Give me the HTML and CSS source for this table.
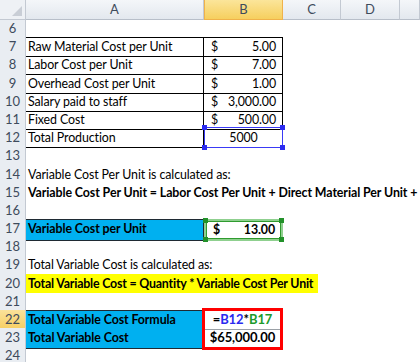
FILE: index.html
```html
<!DOCTYPE html>
<html>
<head>
<link rel="stylesheet" href="styles.css">
</head>
<body>
<div class="sheet">
  <div class="row head">
    <div class="corner"><span class="tri"></span></div>
    <div class="colh">A</div>
    <div class="colh sel">B</div>
    <div class="colh">C</div>
    <div class="colh">D</div>
    <div class="colh"></div>
  </div>

  <div class="row"><div class="rowh">6</div><div class="cell"></div><div class="cell"></div><div class="cell"></div><div class="cell"></div><div class="cell"></div></div>

  <div class="row"><div class="rowh">7</div><div class="cell box top">Raw Material Cost per Unit</div><div class="cell box top money"><span>$</span><span>5.00</span></div><div class="cell"></div><div class="cell"></div><div class="cell"></div></div>
  <div class="row"><div class="rowh">8</div><div class="cell box">Labor Cost per Unit</div><div class="cell box money"><span>$</span><span>7.00</span></div><div class="cell"></div><div class="cell"></div><div class="cell"></div></div>
  <div class="row"><div class="rowh">9</div><div class="cell box">Overhead Cost per Unit</div><div class="cell box money"><span>$</span><span>1.00</span></div><div class="cell"></div><div class="cell"></div><div class="cell"></div></div>
  <div class="row"><div class="rowh">10</div><div class="cell box">Salary paid to staff</div><div class="cell box money"><span>$</span><span>3,000.00</span></div><div class="cell"></div><div class="cell"></div><div class="cell"></div></div>
  <div class="row"><div class="rowh">11</div><div class="cell box">Fixed Cost</div><div class="cell box money"><span>$</span><span>500.00</span></div><div class="cell"></div><div class="cell"></div><div class="cell"></div></div>
  <div class="row"><div class="rowh">12</div><div class="cell box">Total Production</div>
    <div class="cell ref ref-blue center">5000<i class="h tl"></i><i class="h tr"></i><i class="h bl"></i><i class="h br"></i></div>
    <div class="cell"></div><div class="cell"></div><div class="cell"></div></div>

  <div class="row"><div class="rowh">13</div><div class="cell wide"></div></div>
  <div class="row"><div class="rowh">14</div><div class="cell wide">Variable Cost Per Unit is calculated as:</div></div>
  <div class="row"><div class="rowh">15</div><div class="cell wide bold">Variable Cost Per Unit = Labor Cost Per Unit + Direct Material Per Unit +</div></div>
  <div class="row"><div class="rowh">16</div><div class="cell wide"></div></div>

  <div class="row"><div class="rowh">17</div><div class="cell fill top-line bold">Variable Cost per Unit</div>
    <div class="cell ref ref-green money bold"><span>$</span><span>13.00</span><i class="h tl"></i><i class="h tr"></i><i class="h bl"></i><i class="h br"></i></div>
    <div class="cell"></div><div class="cell"></div><div class="cell"></div></div>

  <div class="row"><div class="rowh">18</div><div class="cell wide"></div></div>
  <div class="row"><div class="rowh">19</div><div class="cell wide">Total Variable Cost is calculated as:</div></div>
  <div class="row"><div class="rowh">20</div><div class="cell wide bold"><span class="mark">Total Variable Cost = Quantity * Variable Cost Per Unit</span></div></div>
  <div class="row"><div class="rowh">21</div><div class="cell wide"></div></div>

  <div class="row"><div class="rowh active">22</div><div class="cell fill top-line bold">Total Variable Cost Formula</div>
    <div class="cell result first center bold">=<span class="blue">B12</span>*<span class="green">B17</span></div>
    <div class="cell"></div><div class="cell"></div><div class="cell"></div></div>
  <div class="row"><div class="rowh">23</div><div class="cell fill bold">Total Variable Cost</div>
    <div class="cell result last center bold">$65,000.00</div>
    <div class="cell"></div><div class="cell"></div><div class="cell"></div></div>

  <div class="row"><div class="rowh">24</div><div class="cell wide"></div></div>
</div>
</body>
</html>
```

FILE: styles.css
```css
body {
  margin: 0;
  background: #fff;
  font-family: Lato, "Liberation Sans", sans-serif;
  font-size: 12.4px;
  letter-spacing: -0.1px;
  color: #000;
  overflow: hidden;
}

.sheet {
  width: 420px;
  height: 362px;
  overflow: hidden;
}

.row {
  display: grid;
  grid-template-columns: 26px 178px 79px 58px 59px 1fr;
  height: 18.2px;
}

.row.head {
  height: 19px;
}

/* headers */
.corner {
  position: relative;
  background: #eef1f5;
  border-right: 1px solid #c3c9d2;
  border-bottom: 1px solid #c3c9d2;
  box-sizing: border-box;
}

.corner .tri {
  position: absolute;
  right: 3px;
  bottom: 3px;
  width: 0;
  height: 0;
  border-left: 10px solid transparent;
  border-bottom: 10px solid #c9ced6;
}

.colh {
  background: linear-gradient(#f4f6f9, #e3e8ee);
  border-right: 1px solid #c3c9d2;
  border-bottom: 1px solid #b8bfc9;
  box-sizing: border-box;
  text-align: center;
  line-height: 19px;
  color: #3e4b5c;
  font-size: 13px;
  letter-spacing: 0;
}

.colh.sel {
  background: linear-gradient(#fbe59a, #f6cf5e);
  border: 1px solid #f0b24a;
  border-top: 0;
}

.rowh {
  background: #e9edf2;
  border-right: 1px solid #c3c9d2;
  border-bottom: 1px solid #d3d8df;
  box-sizing: border-box;
  text-align: center;
  line-height: 19px;
  color: #3e4b5c;
  font-size: 13px;
  letter-spacing: 0;
}

.rowh.active {
  background: linear-gradient(#fbe29a, #f7cf63);
  border-bottom-color: #f0b24a;
}

/* cells */
.cell {
  position: relative;
  box-sizing: border-box;
  padding: 1px 2px 0;
  line-height: 18px;
  white-space: nowrap;
  overflow: visible;
}

.cell.wide {
  grid-column: 2 / -1;
  overflow: hidden;
}

.bold {
  font-weight: bold;
}

.center {
  text-align: center;
}

.box {
  border-right: 1px solid #000;
  border-bottom: 1px solid #000;
}

.box.top {
  border-top: 1px solid #000;
  padding-top: 0;
}

.money {
  display: flex;
  justify-content: space-between;
  padding-left: 7px;
  padding-right: 6px;
}

.fill {
  background: #00b0f0;
  border-bottom: 1px solid #1f2a33;
  border-right: 1px solid #1f2a33;
}

.fill.top-line {
  border-top: 1px solid #1f2a33;
  padding-top: 0;
}

.mark {
  display: inline-block;
  background: #ffff00;
  margin: -1px 0 0 -2px;
  padding: 1px 5px 0 2px;
  height: 18px;
  letter-spacing: -0.2px;
}

/* formula reference ranges */
.ref-blue {
  border: 1px solid #3a3af5;
  margin-top: -1px;
  height: calc(100% + 1px);
}

.ref-green {
  border: 2px solid #8fd08f;
  outline: 1px solid #2f9b2f;
  outline-offset: -3px;
  padding-top: 0;
}

.h {
  position: absolute;
  width: 5px;
  height: 5px;
}

.ref-blue .h {
  background: #2b2bf0;
}

.ref-green .h {
  background: #22912a;
}

.h.tl { left: -3px; top: -3px; }
.h.tr { right: -3px; top: -3px; }
.h.bl { left: -3px; bottom: -3px; }
.h.br { right: -3px; bottom: -3px; }

.result {
  border-left: 3px solid #ff0000;
  border-right: 3px solid #ff0000;
  margin-left: -2px;
  font-size: 13px;
}

.result.first {
  border-top: 3px solid #ff0000;
  border-bottom: 1px solid #9aa0a6;
  margin-top: -2px;
  height: calc(100% + 2px);
  padding-top: 0;
  line-height: 16px;
}

.result.last {
  border-bottom: 3px solid #ff0000;
  height: calc(100% + 1px);
  padding-top: 0;
}

.blue {
  color: #2a2af0;
}

.green {
  color: #1c9a2a;
}
```
